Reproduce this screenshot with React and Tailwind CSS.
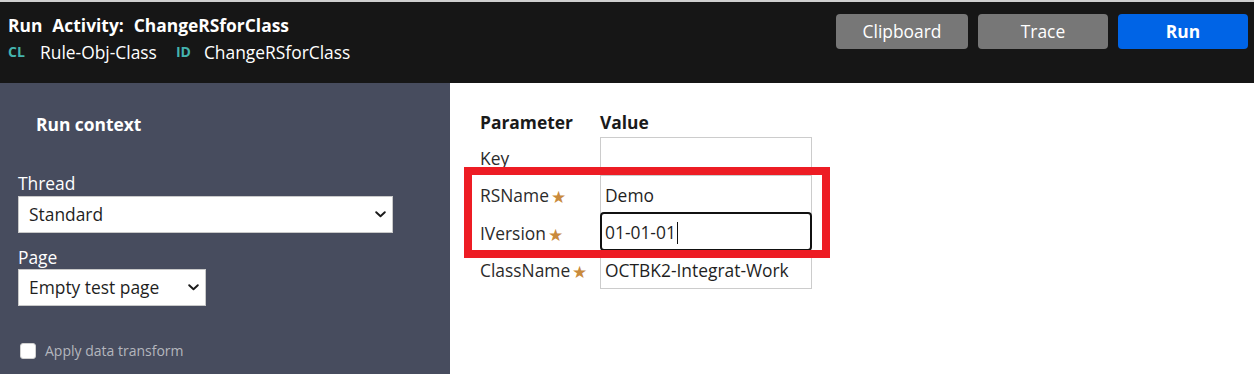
import React from 'react';

const Chevron = () => (
  <svg width="11" height="7" viewBox="0 0 11 7" fill="none">
    <path d="M1.2 1.2 L5.5 5.3 L9.8 1.2" stroke="#1a1a1a" strokeWidth="1.9" strokeLinecap="round" strokeLinejoin="round" />
  </svg>
);

const Select = ({ value, width }) => (
  <div className={`flex items-center justify-between bg-white border border-[#c9c9c9] pl-[10px] pr-[6px] h-[37px] text-[17.4px] text-[#1f1f1f] ${width}`}>
    <span>{value}</span>
    <Chevron />
  </div>
);

const Star = () => <span className="text-[#c98a3c] text-[17px] ml-[2px] relative top-[1px]">★</span>;

const params = [
  { label: 'Key', value: '', required: false },
  { label: 'RSName', value: 'Demo', required: true },
  { label: 'IVersion', value: '01-01-01', required: true, focused: true },
  { label: 'ClassName', value: 'OCTBK2-Integrat-Work', required: true },
];

export default function App() {
  return (
    <div className="w-full h-[374px] overflow-hidden bg-white font-['Open_Sans',sans-serif]">
      <div className="h-[2px] bg-[#cfcfcf]" />

      {/* Header */}
      <div className="h-[81px] bg-[#161616] flex justify-between">
        <div className="pl-2 pt-[12px] text-white">
          <div className="flex gap-[10px] text-[17.4px] font-bold leading-[22px]">
            <span>Run</span>
            <span>Activity:</span>
            <span>ChangeRSforClass</span>
          </div>
          <div className="flex items-center mt-[5px] text-[17.4px] leading-[22px]">
            <span className="text-[14px] font-bold text-[#44b3ae] w-[32px]">CL</span>
            <span className="mr-[19px]">Rule-Obj-Class</span>
            <span className="text-[14px] font-bold text-[#44b3ae] w-[28px]">ID</span>
            <span>ChangeRSforClass</span>
          </div>
        </div>
        <div className="flex gap-[10px] pt-[12px] pr-[6px]">
          <button className="w-[132px] h-[35px] rounded-[4px] bg-[#777777] text-white text-[17.4px]">Clipboard</button>
          <button className="w-[130px] h-[35px] rounded-[4px] bg-[#777777] text-white text-[17.4px]">Trace</button>
          <button className="w-[130px] h-[35px] rounded-[4px] bg-[#0064e6] text-white text-[17.4px] font-bold">Run</button>
        </div>
      </div>

      <div className="flex h-[291px]">
        {/* Run context panel */}
        <div className="w-[450px] bg-[#474c5e] pl-[18px] pt-[30px] text-white">
          <div className="pl-[18px] text-[17.4px] font-bold leading-[22px]">Run context</div>
          <div className="mt-[37px] text-[17.4px] leading-[22px]">Thread</div>
          <div className="mt-[2px]"><Select value="Standard" width="w-[375px]" /></div>
          <div className="mt-[13px] text-[17.4px] leading-[22px]">Page</div>
          <div className="mt-[1px]"><Select value="Empty test page" width="w-[188px]" /></div>
          <label className="flex items-center gap-[9px] mt-[36px] pl-[2px]">
            <span className="w-[16px] h-[16px] bg-white rounded-[3px] border border-[#d0d0d0]" />
            <span className="text-[14px] text-[#b4b6bd] leading-[18px]">Apply data transform</span>
          </label>
        </div>

        {/* Parameters */}
        <div className="flex-1 relative pl-[30px] pt-[26px]">
          <div className="flex text-[17.4px] font-bold text-[#1a1a1a] leading-[26px]">
            <span className="w-[120px]">Parameter</span>
            <span>Value</span>
          </div>
          <div className="mt-[2px]">
            {params.map((p, i) => (
              <div key={p.label} className={`flex items-center ${i > 0 ? '-mt-[1.5px]' : ''}`}>
                <div className="w-[120px] text-[17.4px] text-[#2b2b2b] pt-[3px]">
                  {p.label}
                  {p.required && <Star />}
                </div>
                <div
                  className={`w-[212px] h-[39px] flex items-center text-[17.4px] text-[#1f1f1f] pt-[2px] ${
                    p.focused
                      ? 'border-2 border-[#111] rounded-[4px] pl-[3px] relative z-10'
                      : 'border border-[#cccccc] pl-[4px]'
                  }`}
                >
                  {p.value}
                  {p.focused && <span className="w-px h-[22px] bg-[#111] ml-px" />}
                </div>
              </div>
            ))}
          </div>

          {/* Highlight annotation */}
          <div className="absolute left-[14px] top-[84px] w-[366px] h-[91px] border-[8px] border-[#ed1c24] z-20 pointer-events-none" />
        </div>
      </div>
    </div>
  );
}
